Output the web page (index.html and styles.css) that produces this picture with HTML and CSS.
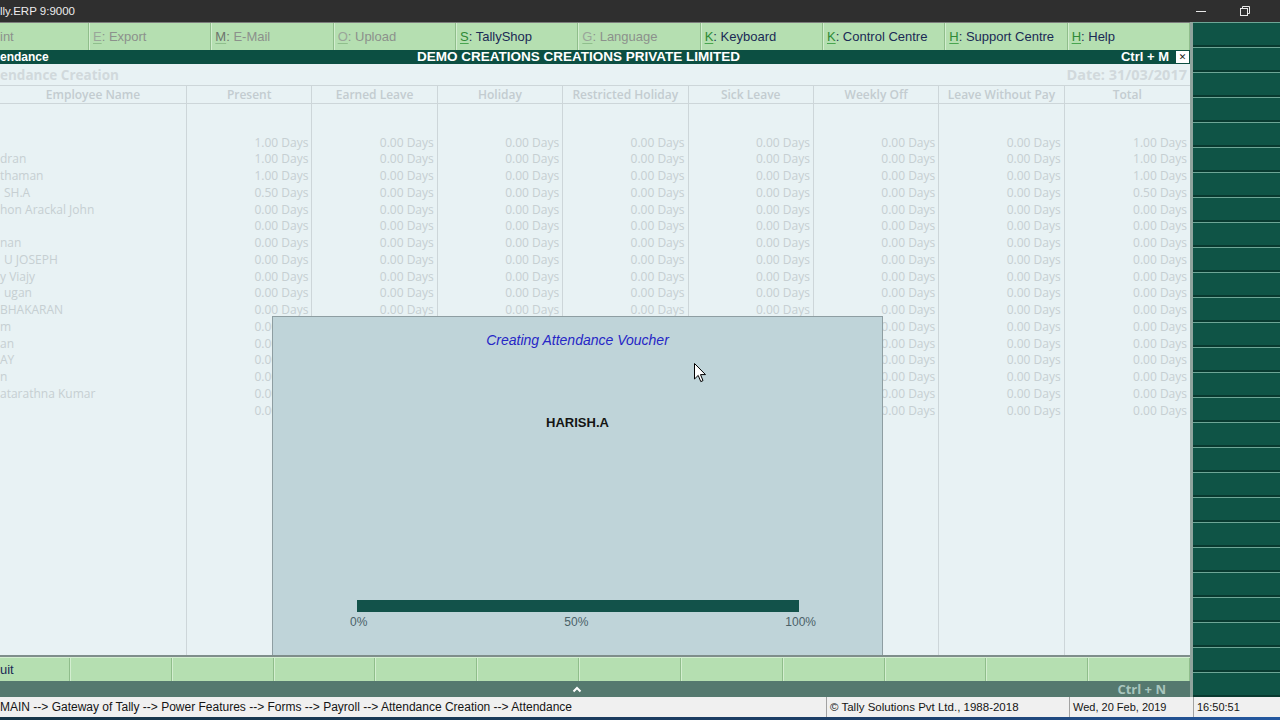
FILE: index.html
```html
<!DOCTYPE html>
<html>
<head>
<meta charset="utf-8">
<title>Tally.ERP 9</title>
<link rel="stylesheet" href="styles.css">
</head>
<body>
<div class="screen">
  <header class="titlebar">
    <span class="app-title">lly.ERP 9:9000</span>
    <div class="win-btns">
      <span class="win-btn"><svg width="12" height="12" viewBox="0 0 12 12"><line x1="1" y1="6.5" x2="11" y2="6.5" stroke="#e8e8e8" stroke-width="1"/></svg></span>
      <span class="win-btn"><svg width="12" height="12" viewBox="0 0 12 12"><rect x="1.5" y="3.5" width="7" height="7" fill="none" stroke="#e8e8e8" stroke-width="1"/><path d="M3.5 3.5 V1.5 H10.5 V8.5 H8.5" fill="none" stroke="#e8e8e8" stroke-width="1"/></svg></span>
    </div>
  </header>

  <div class="main">
    <div class="workarea">
      <nav class="menubar">
        <div class="menu-cell first off"><span>int</span></div>
        <div class="menu-cell off"><span><span class="key">E</span>: Export</span></div>
        <div class="menu-cell off"><span><span class="key dark">M</span><span class="dark">:</span> E-Mail</span></div>
        <div class="menu-cell off"><span><span class="key">O</span>: Upload</span></div>
        <div class="menu-cell"><span><span class="key">S</span>: TallyShop</span></div>
        <div class="menu-cell off"><span><span class="key">G</span>: Language</span></div>
        <div class="menu-cell"><span><span class="key">K</span>: Keyboard</span></div>
        <div class="menu-cell"><span><span class="key">K</span>: Control Centre</span></div>
        <div class="menu-cell"><span><span class="key">H</span>: Support Centre</span></div>
        <div class="menu-cell"><span><span class="key">H</span>: Help</span></div>
      </nav>

      <div class="band">
        <span class="band-left">endance</span>
        <span class="company">DEMO CREATIONS CREATIONS PRIVATE LIMITED</span>
        <span class="band-right"><span class="band-key">Ctrl + M</span><span class="close-box">✕</span></span>
      </div>

      <section class="content">
        <div class="content-title">
          <span>endance Creation</span>
          <span class="date-label">Date: 31/03/2017</span>
        </div>

        <div class="grid">
          <div class="col names">
            <div class="col-head">Employee Name</div>
            <div class="col-body">
              <div class="cell"></div>
              <div class="cell">dran</div>
              <div class="cell">thaman</div>
              <div class="cell indent">SH.A</div>
              <div class="cell">hon Arackal John</div>
              <div class="cell"></div>
              <div class="cell">nan</div>
              <div class="cell indent">U JOSEPH</div>
              <div class="cell">y Viajy</div>
              <div class="cell indent">ugan</div>
              <div class="cell">BHAKARAN</div>
              <div class="cell">m</div>
              <div class="cell">an</div>
              <div class="cell">AY</div>
              <div class="cell">n</div>
              <div class="cell">atarathna Kumar</div>
              <div class="cell"></div>
            </div>
          </div>
          <div class="col">
            <div class="col-head">Present</div>
            <div class="col-body">
              <div class="cell">1.00 Days</div><div class="cell">1.00 Days</div><div class="cell">1.00 Days</div><div class="cell">0.50 Days</div>
              <div class="cell">0.00 Days</div><div class="cell">0.00 Days</div><div class="cell">0.00 Days</div><div class="cell">0.00 Days</div>
              <div class="cell">0.00 Days</div><div class="cell">0.00 Days</div><div class="cell">0.00 Days</div><div class="cell">0.00 Days</div>
              <div class="cell">0.00 Days</div><div class="cell">0.00 Days</div><div class="cell">0.00 Days</div><div class="cell">0.00 Days</div>
              <div class="cell">0.00 Days</div>
            </div>
          </div>
          <div class="col">
            <div class="col-head">Earned Leave</div>
            <div class="col-body">
              <div class="cell">0.00 Days</div><div class="cell">0.00 Days</div><div class="cell">0.00 Days</div><div class="cell">0.00 Days</div>
              <div class="cell">0.00 Days</div><div class="cell">0.00 Days</div><div class="cell">0.00 Days</div><div class="cell">0.00 Days</div>
              <div class="cell">0.00 Days</div><div class="cell">0.00 Days</div><div class="cell">0.00 Days</div><div class="cell">0.00 Days</div>
              <div class="cell">0.00 Days</div><div class="cell">0.00 Days</div><div class="cell">0.00 Days</div><div class="cell">0.00 Days</div>
              <div class="cell">0.00 Days</div>
            </div>
          </div>
          <div class="col">
            <div class="col-head">Holiday</div>
            <div class="col-body">
              <div class="cell">0.00 Days</div><div class="cell">0.00 Days</div><div class="cell">0.00 Days</div><div class="cell">0.00 Days</div>
              <div class="cell">0.00 Days</div><div class="cell">0.00 Days</div><div class="cell">0.00 Days</div><div class="cell">0.00 Days</div>
              <div class="cell">0.00 Days</div><div class="cell">0.00 Days</div><div class="cell">0.00 Days</div><div class="cell">0.00 Days</div>
              <div class="cell">0.00 Days</div><div class="cell">0.00 Days</div><div class="cell">0.00 Days</div><div class="cell">0.00 Days</div>
              <div class="cell">0.00 Days</div>
            </div>
          </div>
          <div class="col">
            <div class="col-head">Restricted Holiday</div>
            <div class="col-body">
              <div class="cell">0.00 Days</div><div class="cell">0.00 Days</div><div class="cell">0.00 Days</div><div class="cell">0.00 Days</div>
              <div class="cell">0.00 Days</div><div class="cell">0.00 Days</div><div class="cell">0.00 Days</div><div class="cell">0.00 Days</div>
              <div class="cell">0.00 Days</div><div class="cell">0.00 Days</div><div class="cell">0.00 Days</div><div class="cell">0.00 Days</div>
              <div class="cell">0.00 Days</div><div class="cell">0.00 Days</div><div class="cell">0.00 Days</div><div class="cell">0.00 Days</div>
              <div class="cell">0.00 Days</div>
            </div>
          </div>
          <div class="col">
            <div class="col-head">Sick Leave</div>
            <div class="col-body">
              <div class="cell">0.00 Days</div><div class="cell">0.00 Days</div><div class="cell">0.00 Days</div><div class="cell">0.00 Days</div>
              <div class="cell">0.00 Days</div><div class="cell">0.00 Days</div><div class="cell">0.00 Days</div><div class="cell">0.00 Days</div>
              <div class="cell">0.00 Days</div><div class="cell">0.00 Days</div><div class="cell">0.00 Days</div><div class="cell">0.00 Days</div>
              <div class="cell">0.00 Days</div><div class="cell">0.00 Days</div><div class="cell">0.00 Days</div><div class="cell">0.00 Days</div>
              <div class="cell">0.00 Days</div>
            </div>
          </div>
          <div class="col">
            <div class="col-head">Weekly Off</div>
            <div class="col-body">
              <div class="cell">0.00 Days</div><div class="cell">0.00 Days</div><div class="cell">0.00 Days</div><div class="cell">0.00 Days</div>
              <div class="cell">0.00 Days</div><div class="cell">0.00 Days</div><div class="cell">0.00 Days</div><div class="cell">0.00 Days</div>
              <div class="cell">0.00 Days</div><div class="cell">0.00 Days</div><div class="cell">0.00 Days</div><div class="cell">0.00 Days</div>
              <div class="cell">0.00 Days</div><div class="cell">0.00 Days</div><div class="cell">0.00 Days</div><div class="cell">0.00 Days</div>
              <div class="cell">0.00 Days</div>
            </div>
          </div>
          <div class="col">
            <div class="col-head">Leave Without Pay</div>
            <div class="col-body">
              <div class="cell">0.00 Days</div><div class="cell">0.00 Days</div><div class="cell">0.00 Days</div><div class="cell">0.00 Days</div>
              <div class="cell">0.00 Days</div><div class="cell">0.00 Days</div><div class="cell">0.00 Days</div><div class="cell">0.00 Days</div>
              <div class="cell">0.00 Days</div><div class="cell">0.00 Days</div><div class="cell">0.00 Days</div><div class="cell">0.00 Days</div>
              <div class="cell">0.00 Days</div><div class="cell">0.00 Days</div><div class="cell">0.00 Days</div><div class="cell">0.00 Days</div>
              <div class="cell">0.00 Days</div>
            </div>
          </div>
          <div class="col last">
            <div class="col-head">Total</div>
            <div class="col-body">
              <div class="cell">1.00 Days</div><div class="cell">1.00 Days</div><div class="cell">1.00 Days</div><div class="cell">0.50 Days</div>
              <div class="cell">0.00 Days</div><div class="cell">0.00 Days</div><div class="cell">0.00 Days</div><div class="cell">0.00 Days</div>
              <div class="cell">0.00 Days</div><div class="cell">0.00 Days</div><div class="cell">0.00 Days</div><div class="cell">0.00 Days</div>
              <div class="cell">0.00 Days</div><div class="cell">0.00 Days</div><div class="cell">0.00 Days</div><div class="cell">0.00 Days</div>
              <div class="cell">0.00 Days</div>
            </div>
          </div>
        </div>

        <div class="dialog">
          <div class="dlg-title">Creating Attendance Voucher</div>
          <div class="dlg-name">HARISH.A</div>
          <div class="progress"></div>
          <div class="progress-labels"><span>0%</span><span>50%</span><span>100%</span></div>
        </div>
      </section>

      <div class="btnbar">
        <div class="btn-cell first">uit</div>
        <div class="btn-cell"></div><div class="btn-cell"></div><div class="btn-cell"></div>
        <div class="btn-cell"></div><div class="btn-cell"></div><div class="btn-cell"></div>
        <div class="btn-cell"></div><div class="btn-cell"></div><div class="btn-cell"></div>
        <div class="btn-cell"></div><div class="btn-cell"></div>
      </div>
      <div class="navrow">
        <span></span>
        <svg class="chevron" width="10" height="7" viewBox="0 0 10 7"><path d="M1.5 5.5 L5 2 L8.5 5.5" fill="none" stroke="#ffffff" stroke-width="2"/></svg>
        <span class="nav-right">Ctrl + N</span>
      </div>
    </div>

    <aside class="sidebar">
      <div class="side-btn"></div><div class="side-btn"></div><div class="side-btn"></div>
      <div class="side-btn"></div><div class="side-btn"></div><div class="side-btn"></div>
      <div class="side-btn"></div><div class="side-btn"></div><div class="side-btn"></div>
      <div class="side-btn"></div><div class="side-btn"></div><div class="side-btn"></div>
      <div class="side-btn"></div><div class="side-btn"></div><div class="side-btn"></div>
      <div class="side-btn"></div><div class="side-btn"></div><div class="side-btn"></div>
      <div class="side-btn"></div><div class="side-btn"></div><div class="side-btn"></div>
      <div class="side-btn"></div><div class="side-btn"></div><div class="side-btn"></div>
      <div class="side-btn"></div><div class="side-btn"></div><div class="side-btn"></div>
    </aside>
  </div>

  <footer class="statusbar">
    <span class="crumb">MAIN --&gt; Gateway of Tally --&gt; Power Features --&gt; Forms --&gt; Payroll --&gt; Attendance Creation --&gt; Attendance</span>
    <span class="seg copy">© Tally Solutions Pvt Ltd., 1988-2018</span>
    <span class="seg date">Wed, 20 Feb, 2019</span>
    <span class="seg time">16:50:51</span>
  </footer>
  <div class="taskstrip"></div>

  <svg class="cursor" width="13" height="20" viewBox="0 0 13 20"><path d="M0.5 0.5 L0.5 16 L4.2 12.4 L6.8 18.6 L9 17.6 L6.5 11.6 L11.5 11.6 Z" fill="#ffffff" stroke="#000000" stroke-width="1" stroke-linejoin="round"/></svg>
</div>
</body>
</html>
```
FILE: styles.css
```css
html, body {
  margin: 0;
  padding: 0;
}
body {
  width: 1280px;
  height: 720px;
  overflow: hidden;
  font-family: "Liberation Sans", Arial, sans-serif;
}
.screen {
  position: relative;
  width: 1280px;
  height: 720px;
  display: flex;
  flex-direction: column;
  background: #2e2e2e;
}

/* title bar */
.titlebar {
  height: 22px;
  flex: none;
  background: #2f2f2f;
  color: #ececec;
  font-size: 11.5px;
  display: flex;
  align-items: center;
  justify-content: space-between;
}
.win-btns {
  display: flex;
  padding-right: 13px;
}
.win-btn {
  width: 44px;
  height: 22px;
  display: flex;
  align-items: center;
  justify-content: center;
}

/* main area */
.main {
  height: 675px;
  flex: none;
  display: flex;
}
.workarea {
  width: 1190px;
  display: flex;
  flex-direction: column;
}

/* top menu */
.menubar {
  height: 28px;
  flex: none;
  box-sizing: border-box;
  border-top: 1px solid #7c7c7c;
  background: #b5dfb1;
  display: flex;
}
.menu-cell {
  flex: 1;
  min-width: 0;
  box-sizing: border-box;
  border-right: 1px solid #8fbd8b;
  box-shadow: inset 1px 0 0 #d3eed0;
  padding-left: 4px;
  display: flex;
  align-items: center;
  font-size: 13px;
  color: #1b2a55;
  white-space: nowrap;
  overflow: hidden;
}
.menu-cell.first {
  flex: none;
  width: 89px;
  padding-left: 0;
  box-shadow: none;
}
.menu-cell .key {
  color: #2f8a36;
  text-decoration: underline;
  text-decoration-color: #49a550;
  text-underline-offset: 2px;
}
.menu-cell.off {
  color: #8c918c;
}
.menu-cell.off .key {
  color: #9aa69a;
  text-decoration-color: #8fbf8c;
}
.menu-cell.off .dark {
  color: #6d746d;
}

/* company band */
.band {
  height: 14px;
  flex: none;
  background: #0c4f42;
  color: #ffffff;
  font-family: "Liberation Sans", Arial, sans-serif;
  font-weight: 700;
  font-size: 12px;
  line-height: 14px;
  display: grid;
  grid-template-columns: 417px auto 1fr;
  align-items: center;
  white-space: nowrap;
}
.company {
  font-size: 13.5px;
}
.band-right {
  justify-self: end;
  display: flex;
  align-items: center;
  gap: 7px;
  padding-right: 1px;
}
.band-key {
  font-size: 13px;
}
.close-box {
  width: 13px;
  height: 12px;
  background: #ffffff;
  color: #1a1a1a;
  font-family: "DejaVu Sans", sans-serif;
  font-size: 9px;
  line-height: 12px;
  text-align: center;
  font-weight: 700;
}

/* content */
.content {
  flex: 1;
  position: relative;
  background: #e8f2f4;
  border-bottom: 2px solid #7f8e8b;
  display: flex;
  flex-direction: column;
  overflow: hidden;
}
.content-title {
  height: 21px;
  flex: none;
  display: flex;
  align-items: center;
  justify-content: space-between;
  padding-right: 3px;
  font-family: "Open Sans", sans-serif;
  font-weight: 700;
  font-size: 13.5px;
  color: #d1d9dc;
}
.date-label {
  font-size: 14.5px;
}
.grid {
  flex: 1;
  display: grid;
  grid-template-columns: 187px repeat(8, 1fr);
  border-top: 1px solid #cdd6d9;
}
.col {
  border-right: 1px solid #cdd6d9;
  display: flex;
  flex-direction: column;
  min-width: 0;
}
.col.last {
  border-right: none;
}
.col-head {
  height: 17px;
  border-bottom: 1px solid #cdd6d9;
  font-family: "Open Sans", sans-serif;
  font-weight: 600;
  font-size: 12px;
  line-height: 17px;
  color: #c3ccd0;
  text-align: center;
  white-space: nowrap;
}
.col-body {
  padding-top: 30.5px;
}
.cell {
  height: 16.75px;
  line-height: 16.75px;
  text-align: right;
  padding-right: 3px;
  font-family: "Open Sans", sans-serif;
  font-size: 12px;
  color: #c6cfd2;
  white-space: nowrap;
}
.names .cell {
  text-align: left;
  padding-left: 0;
}
.names .cell.indent {
  padding-left: 4px;
}

/* progress dialog */
.dialog {
  position: absolute;
  left: 272px;
  top: 252px;
  width: 611px;
  bottom: 0;
  box-sizing: border-box;
  background: #bfd4d9;
  border: 1px solid #8e9ea2;
  border-bottom: none;
  display: flex;
  flex-direction: column;
  align-items: center;
}
.dlg-title {
  margin-top: 15px;
  line-height: 16px;
  font-size: 14px;
  font-style: italic;
  color: #2626c6;
}
.dlg-name {
  margin-top: 67px;
  line-height: 16px;
  font-size: 13px;
  font-weight: 700;
  color: #141414;
}
.progress {
  margin-top: 169px;
  width: 442px;
  height: 12px;
  background: #12524a;
}
.progress-labels {
  align-self: flex-start;
  margin-left: 77px;
  margin-top: 2px;
  width: 466px;
  display: flex;
  justify-content: space-between;
  line-height: 16px;
  font-size: 12px;
  color: #4b6168;
}

/* bottom buttons */
.btnbar {
  height: 24px;
  flex: none;
  box-sizing: border-box;
  border-top: 1px solid #d4eed1;
  background: #b5dfb1;
  display: flex;
}
.btn-cell {
  flex: 1;
  box-sizing: border-box;
  border-right: 1px solid #8fbd8b;
  box-shadow: inset 1px 0 0 #d3eed0;
  display: flex;
  align-items: center;
  font-size: 13px;
  color: #1b2a55;
}
.btn-cell.first {
  flex: none;
  width: 70px;
  box-shadow: none;
}
.navrow {
  height: 16px;
  flex: none;
  background: #55796f;
  display: grid;
  grid-template-columns: 572px 10px 1fr;
  align-items: center;
}
.chevron {
  display: block;
}
.nav-right {
  justify-self: end;
  padding-right: 24px;
  font-family: "Open Sans", sans-serif;
  font-weight: 700;
  font-size: 13px;
  line-height: 16px;
  color: #a9c6be;
}

/* right sidebar */
.sidebar {
  width: 90px;
  flex: none;
  box-sizing: border-box;
  border-left: 3px solid #8fa49d;
  background: #0f5446;
  display: flex;
  flex-direction: column;
}
.side-btn {
  height: 25px;
  flex: none;
  box-sizing: border-box;
  border-top: 1px solid #6ea696;
  border-bottom: 2px solid #093a30;
  background: #0f5446;
}

/* status bar */
.statusbar {
  height: 20px;
  flex: none;
  background: #f0f0f0;
  display: flex;
  align-items: center;
  font-size: 11.5px;
  color: #151515;
  white-space: nowrap;
}
.crumb {
  width: 826px;
  flex: none;
  overflow: hidden;
  font-size: 12px;
}
.seg {
  height: 20px;
  line-height: 20px;
  box-sizing: border-box;
  border-left: 1px solid #a2a2a2;
  padding-left: 3px;
  flex: none;
}
.copy {
  width: 243px;
}
.date {
  width: 124px;
  font-size: 11px;
}
.time {
  flex: 1;
  font-size: 11px;
}
.taskstrip {
  height: 3px;
  flex: none;
  background: linear-gradient(90deg, #173547, #1d3f6a 70%, #2458a0);
}

/* mouse pointer */
.cursor {
  position: absolute;
  left: 694px;
  top: 363px;
}
```
